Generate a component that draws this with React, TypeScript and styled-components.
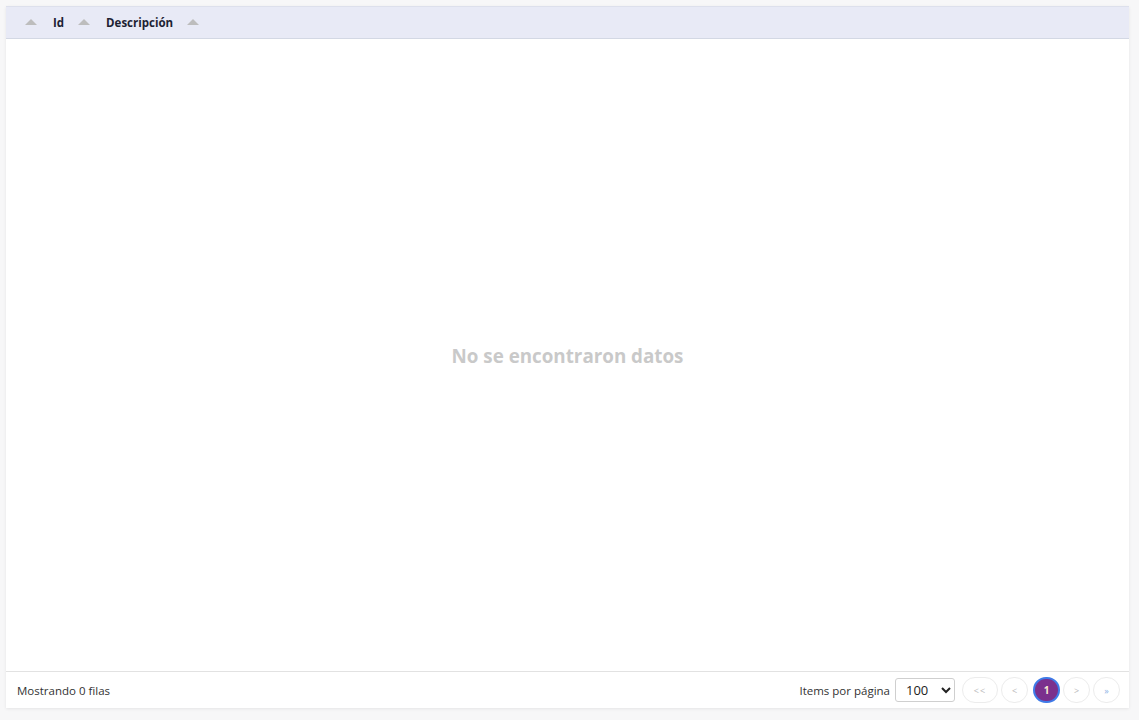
import React from "react";
import styled, { createGlobalStyle } from "styled-components";

const GlobalStyle = createGlobalStyle`
  html, body {
    margin: 0;
    padding: 0;
    background: #f7f7f8;
    font-family: "Open Sans", "Noto Sans", "Liberation Sans", sans-serif;
  }
  #root {
    height: 720px;
  }
`;

const Page = styled.div`
  box-sizing: border-box;
  height: 720px;
  padding: 6px 10px 12px 6px;
  display: flex;
`;

const Card = styled.div`
  flex: 1;
  display: flex;
  flex-direction: column;
  background: #ffffff;
  box-shadow: 0 1px 3px rgba(0, 0, 0, 0.08);
`;

const HeaderRow = styled.div`
  height: 31px;
  display: flex;
  align-items: center;
  gap: 16px;
  padding-left: 19px;
  background: #e8eaf6;
  border-top: 1px solid #dde0ec;
  border-bottom: 1px solid #d3d8e4;
`;

const HeaderCell = styled.div`
  display: flex;
  align-items: center;
  gap: 14px;
  font-size: 11.5px;
  font-weight: 700;
  color: #1d2333;
`;

const SortIcon = styled.span`
  width: 0;
  height: 0;
  border-left: 6px solid transparent;
  border-right: 6px solid transparent;
  border-bottom: 6px solid #bdbdbd;
  margin-bottom: 1px;
`;

const Body = styled.div`
  flex: 1;
  display: flex;
  align-items: center;
  justify-content: center;
`;

const EmptyText = styled.div`
  font-size: 18.8px;
  font-weight: 700;
  color: #c9c9c9;
  margin-top: 2px;
`;

const Footer = styled.div`
  height: 36px;
  display: flex;
  align-items: center;
  justify-content: space-between;
  padding: 0 9px 0 11px;
  border-top: 1px solid #e2e2e2;
  font-size: 11.5px;
  color: #333;
`;

const Controls = styled.div`
  display: flex;
  align-items: center;
`;

const Label = styled.span`
  margin-right: 5px;
`;

const Select = styled.select`
  width: 60px;
  height: 24px;
  font-family: inherit;
  font-size: 13px;
  color: #222;
  padding: 0 4px 0 6px;
  border: 1px solid #cfcfcf;
  border-radius: 3px;
  background: #fff;
  margin-right: 7px;
`;

const Pager = styled.div`
  display: flex;
  align-items: center;
  gap: 3px;
`;

const PageButton = styled.button<{ $active?: boolean; $wide?: boolean; $blue?: boolean }>`
  box-sizing: border-box;
  width: ${(p) => (p.$wide ? "36px" : "27px")};
  height: 26px;
  padding: 0;
  border-radius: 13px;
  font-family: inherit;
  font-size: ${(p) => (p.$active ? "10px" : "9px")};
  font-weight: ${(p) => (p.$active ? 700 : 400)};
  letter-spacing: ${(p) => (p.$wide ? "1px" : "0")};
  border: ${(p) => (p.$active ? "2px solid #3f7be8" : "1px solid #ececec")};
  background: ${(p) => (p.$active ? "#7b308d" : "#ffffff")};
  color: ${(p) => (p.$active ? "#f6ecd0" : p.$blue ? "#8fb3e6" : "#b9b9b9")};
  margin-left: ${(p) => (p.$active ? "2px" : "0")};
`;

export default function App() {
  return (
    <>
      <GlobalStyle />
      <Page>
        <Card>
          <HeaderRow>
            <HeaderCell>
              <SortIcon />
            </HeaderCell>
            <HeaderCell>
              Id
              <SortIcon />
            </HeaderCell>
            <HeaderCell>
              Descripción
              <SortIcon />
            </HeaderCell>
          </HeaderRow>
          <Body>
            <EmptyText>No se encontraron datos</EmptyText>
          </Body>
          <Footer>
            <span>Mostrando 0 filas</span>
            <Controls>
              <Label>Items por página</Label>
              <Select defaultValue="100">
                <option value="10">10</option>
                <option value="50">50</option>
                <option value="100">100</option>
              </Select>
              <Pager>
                <PageButton $wide>&lt;&lt;</PageButton>
                <PageButton>&lt;</PageButton>
                <PageButton $active>1</PageButton>
                <PageButton>&gt;</PageButton>
                <PageButton $blue>»</PageButton>
              </Pager>
            </Controls>
          </Footer>
        </Card>
      </Page>
    </>
  );
}
